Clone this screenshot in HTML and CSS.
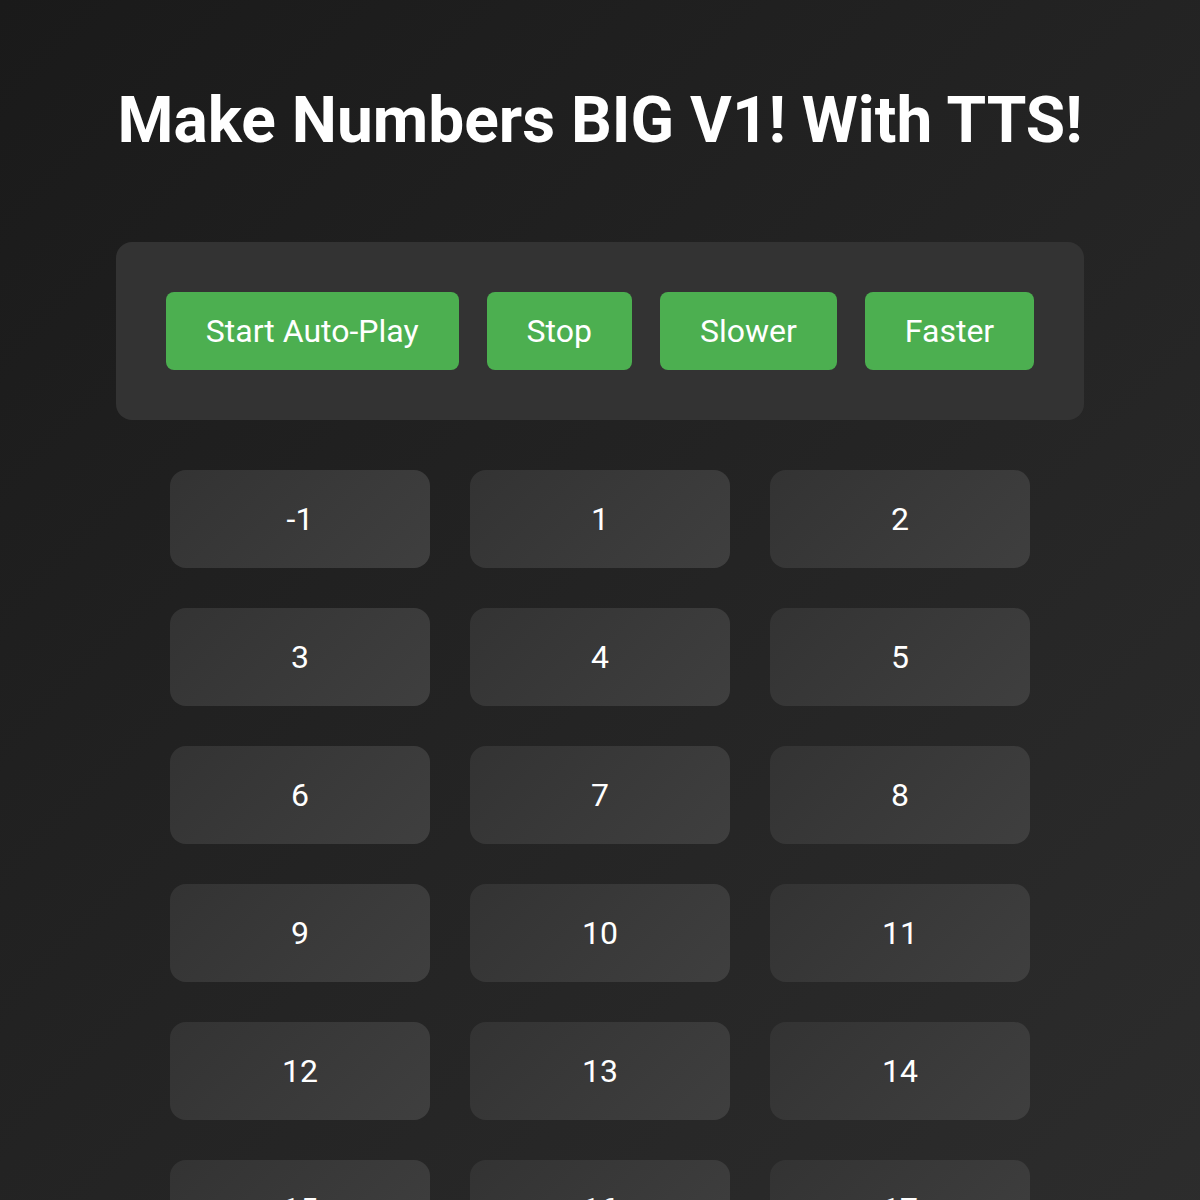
FILE: index.html
```html
<!DOCTYPE html>
<html lang="en">
<head>
    <meta charset="UTF-8">
    <meta name="viewport" content="width=device-width, initial-scale=1.0">
    <title>Make Numbers BIG V1! With TTS!</title>
    <link rel="stylesheet" href="styles.css">
</head>
<body>
    <h1 class="title">Make Numbers BIG V1! With TTS!</h1>

    <div class="controls">
        <button class="control-button" onclick="startAutoPlay()">Start Auto-Play</button>
        <button class="control-button" onclick="stopAutoPlay()">Stop</button>
        <button class="control-button" onclick="slower()">Slower</button>
        <button class="control-button" onclick="faster()">Faster</button>
    </div>

    <div class="numbers-grid" id="numbersGrid">
        <!-- Los numeros se cargan con el script -->
    </div>

    <script>
        const numbers = [-1];
        for (let i = 1; i <= 20; i++) numbers.push(i);

        let delay = 1000;
        let timer = null;
        let current = 0;

        function speak(n) {
            if (!window.speechSynthesis) return;
            const u = new SpeechSynthesisUtterance(String(n));
            speechSynthesis.speak(u);
        }

        function displayNumbers() {
            const grid = document.getElementById('numbersGrid');
            grid.innerHTML = '';
            numbers.forEach(n => {
                const btn = document.createElement('button');
                btn.className = 'number-button';
                btn.textContent = n;
                btn.onclick = () => speak(n);
                grid.appendChild(btn);
            });
        }

        function startAutoPlay() {
            stopAutoPlay();
            timer = setInterval(() => {
                speak(numbers[current]);
                current = (current + 1) % numbers.length;
            }, delay);
        }

        function stopAutoPlay() {
            clearInterval(timer);
            timer = null;
        }

        function slower() {
            delay += 250;
            if (timer) startAutoPlay();
        }

        function faster() {
            delay = Math.max(250, delay - 250);
            if (timer) startAutoPlay();
        }

        displayNumbers();
    </script>
</body>
</html>
```

FILE: styles.css
```css
* {
    box-sizing: border-box;
    margin: 0;
    padding: 0;
    font-family: Roboto, 'Liberation Sans', Arial, sans-serif;
}

body {
    background: linear-gradient(135deg, #1a1a1a, #2e2e2e);
    min-height: 100vh;
    color: white;
    padding: 83px 116px 0;
}

.title {
    font-size: 64px;
    font-weight: bold;
    text-align: center;
    line-height: 75px;
    white-space: nowrap;
    margin-bottom: 84px;
}

.controls {
    display: flex;
    justify-content: center;
    gap: 28px;
    background: #333;
    padding: 50px;
    border-radius: 16px;
    margin-bottom: 50px;
}

.control-button {
    background: #4CAF50;
    color: white;
    border: none;
    border-radius: 8px;
    font-size: 32px;
    line-height: 38px;
    padding: 20px 40px;
    white-space: nowrap;
    cursor: pointer;
}

.numbers-grid {
    display: grid;
    grid-template-columns: repeat(3, 260px);
    gap: 40px;
    justify-content: center;
}

.number-button {
    background: linear-gradient(135deg, #333, #3f3f3f);
    color: white;
    border: none;
    border-radius: 16px;
    font-size: 32px;
    line-height: 38px;
    padding: 30px 0;
    cursor: pointer;
}
```
